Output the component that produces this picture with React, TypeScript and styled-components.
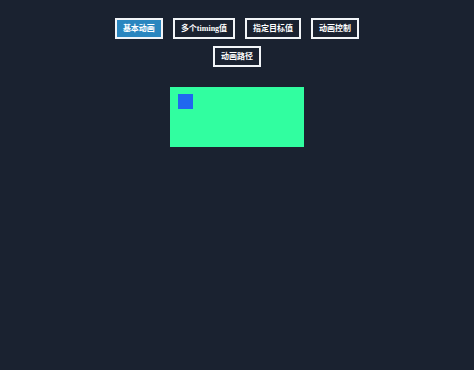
import React, { useState } from "react";
import styled, { createGlobalStyle } from "styled-components";

const Global = createGlobalStyle`
  html, body {
    margin: 0;
    padding: 0;
    background: #1a2230;
  }
  body {
    width: 474px;
    height: 370px;
    overflow: hidden;
    font-family: "Liberation Serif", "Noto Sans CJK SC", serif;
  }
`;

const Page = styled.div`
  display: flex;
  flex-direction: column;
  align-items: center;
  padding-top: 18px;
`;

const Toolbar = styled.div`
  display: flex;
  flex-wrap: wrap;
  justify-content: center;
  gap: 7px 10px;
  width: 290px;
`;

const Button = styled.button<{ $active?: boolean }>`
  box-sizing: border-box;
  height: 21px;
  padding: 0 6px;
  display: flex;
  align-items: center;
  border: 2px solid #f2f5f8;
  background: ${(p) => (p.$active ? "#2a86bf" : "transparent")};
  color: #ffffff;
  font-family: "Liberation Serif", "Noto Sans CJK SC", serif;
  font-weight: bold;
  font-size: 8px;
  line-height: 1;
  letter-spacing: 0;
  cursor: pointer;
`;

const Stage = styled.div`
  box-sizing: border-box;
  margin-top: 20px;
  width: 134px;
  height: 60px;
  background: #31fea0;
  padding: 7px 8px;
`;

const Square = styled.div`
  width: 15px;
  height: 15px;
  background: #2068ef;
`;

const labels = ["基本动画", "多个timing值", "指定目标值", "动画控制", "动画路径"];

export default function App() {
  const [active, setActive] = useState(0);
  return (
    <>
      <Global />
      <Page>
        <Toolbar>
          {labels.map((l, i) => (
            <Button key={l} $active={i === active} onClick={() => setActive(i)}>
              {l}
            </Button>
          ))}
        </Toolbar>
        <Stage>
          <Square />
        </Stage>
      </Page>
    </>
  );
}
